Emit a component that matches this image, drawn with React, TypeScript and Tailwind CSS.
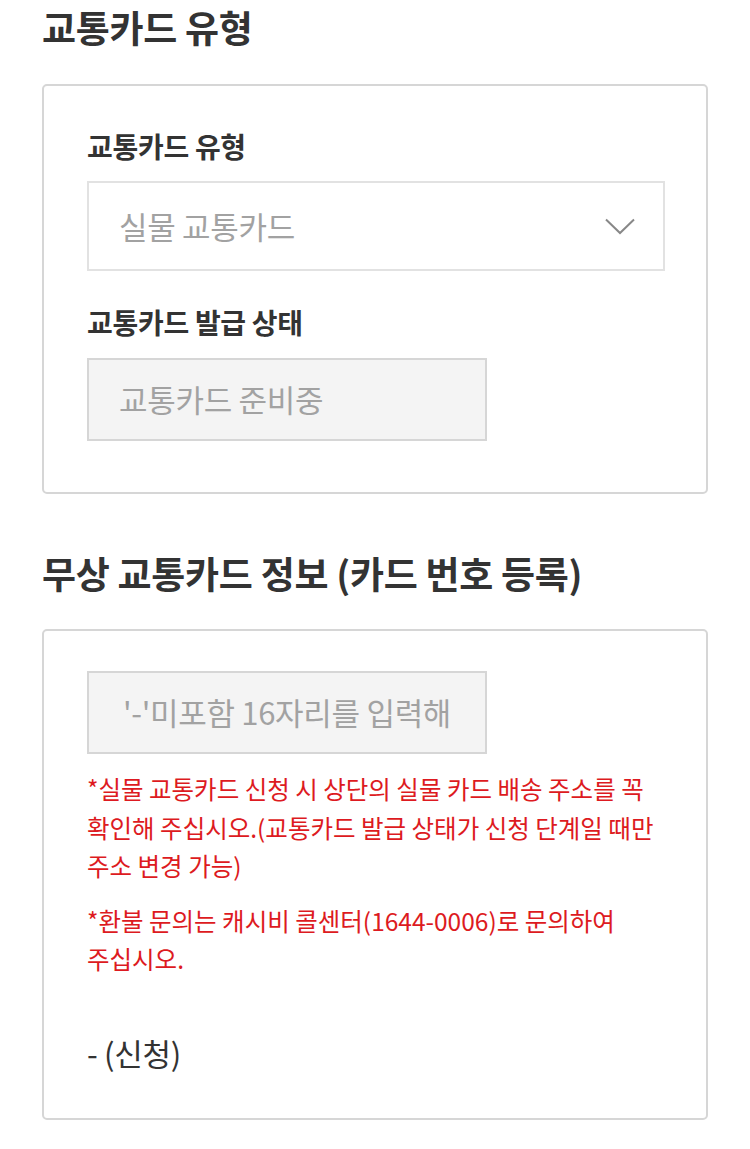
export default function App() {
  const font = { fontFamily: '"Noto Sans CJK KR", "Noto Sans", sans-serif' };
  return (
    <div style={font} className="min-h-[1149px] bg-white px-[42px] pt-[2px] text-[#333]">
      {/* 교통카드 유형 */}
      <h2 className="text-[37px] font-bold leading-[50px] tracking-[-0.3px]">교통카드 유형</h2>
      <section className="mt-[32px] rounded-[5px] border-2 border-[#d6d6d6] px-[43px] pt-[40px] pb-[51px]">
        <label className="block text-[28px] font-bold leading-[40px] tracking-[-0.3px]">교통카드 유형</label>
        <div className="mt-[15px] flex h-[90px] w-[578px] items-center justify-between border-2 border-[#e2e2e2] pl-[30px] pr-[28px]">
          <span className="text-[31px] text-[#a2a2a2] tracking-[-0.3px]">실물 교통카드</span>
          <svg width="30" height="17" viewBox="0 0 30 17" fill="none">
            <path d="M1 1.5 L15 15 L29 1.5" stroke="#888" strokeWidth="2" />
          </svg>
        </div>
        <label className="mt-[31px] block text-[28px] font-bold leading-[40px] tracking-[-0.3px]">교통카드 발급 상태</label>
        <div className="mt-[16px] flex h-[83px] w-[400px] items-center border-2 border-[#d6d6d6] bg-[#f4f4f4] pl-[30px]">
          <span className="text-[31px] text-[#a2a2a2] tracking-[-0.3px]">교통카드 준비중</span>
        </div>
      </section>

      {/* 무상 교통카드 정보 */}
      <h2 className="mt-[54px] text-[37px] font-bold leading-[50px] tracking-[-0.3px]">무상 교통카드 정보 (카드 번호 등록)</h2>
      <section className="mt-[31px] rounded-[5px] border-2 border-[#d6d6d6] px-[43px] pt-[40px] pb-[45px]">
        <div className="flex h-[83px] w-[400px] items-center justify-center border-2 border-[#d6d6d6] bg-[#f4f4f4]">
          <span className="text-[31px] text-[#a2a2a2] tracking-[-0.3px]">'-'미포함 16자리를 입력해</span>
        </div>
        <div className="mt-[16px] whitespace-nowrap text-[24.5px] leading-[38.5px] text-[#dd1a21]">
          <p>
            *실물 교통카드 신청 시 상단의 실물 카드 배송 주소를 꼭
            <br />
            확인해 주십시오.(교통카드 발급 상태가 신청 단계일 때만
            <br />
            주소 변경 가능)
          </p>
          <p className="mt-[16px]">
            *환불 문의는 캐시비 콜센터(1644-0006)로 문의하여
            <br />
            주십시오.
          </p>
        </div>
        <p className="mt-[54px] text-[31px] leading-[40px] tracking-[-0.3px]">- (신청)</p>
      </section>
    </div>
  );
}
